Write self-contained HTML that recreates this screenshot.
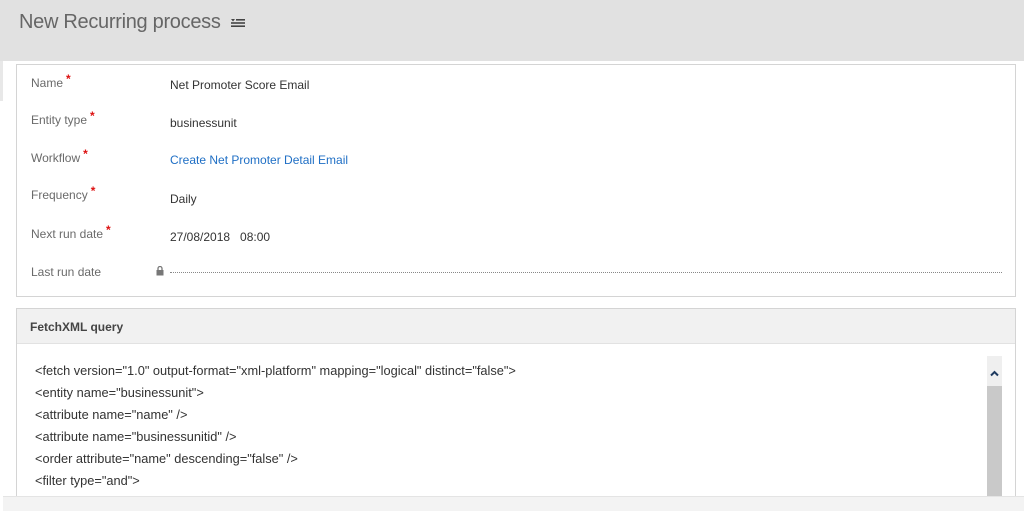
<!DOCTYPE html>
<html><head><meta charset="utf-8"><style>
*{margin:0;padding:0;box-sizing:border-box}
html,body{width:1024px;height:511px;overflow:hidden}
body{background:#fff;font-family:"Liberation Sans",sans-serif;position:relative}
.hdr{position:absolute;left:0;top:0;width:1024px;height:61px;background:#e1e1e1}
.title{position:absolute;left:19px;top:11px;font-size:20px;color:#666;letter-spacing:-0.3px;white-space:nowrap}
.ic{position:absolute;left:231px;top:18px}
.strip{position:absolute;left:0;top:61px;width:3px;height:40px;background:#e8e8e8}
.box1{position:absolute;left:16px;top:64px;width:1000px;height:233px;border:1px solid #d4d4d4;background:#fff}
.lbl{position:absolute;left:14px;font-size:12px;color:#6a6a6a}
.lbl b{color:#d11;font-weight:bold;font-size:12px;position:relative;top:-4px;margin-left:3px}
.val{position:absolute;left:153px;font-size:12px;color:#333}
.box2{position:absolute;left:16px;top:308px;width:1000px;height:203px;border:1px solid #d4d4d4;border-bottom:none;background:#fff;overflow:hidden}
.b2h{height:35px;background:#f1f1f1;border-bottom:1px solid #e2e2e2;font-size:12px;font-weight:bold;color:#444;padding:11px 0 0 13px}
.code{position:absolute;left:18px;font-size:12.8px;color:#333;white-space:pre}
.sb{position:absolute;left:970px;top:47px;width:15px;height:170px;background:#c9c9c9}
.sbu{position:absolute;left:970px;top:47px;width:15px;height:30px;background:#efefef}
.bot{position:absolute;left:3px;top:496px;width:1021px;height:15px;background:#f3f3f3;border-top:1px solid #e4e4e4;z-index:5}
</style></head><body>
<div class="hdr"><div class="title">New Recurring process</div>
<svg class="ic" width="14" height="10"><polygon points="0,1 4,1 2,3.5" fill="#444"/><rect x="5" y="1" width="9" height="1.6" fill="#444"/><rect x="0" y="4.2" width="14" height="1.6" fill="#444"/><rect x="0" y="7.4" width="14" height="1.6" fill="#444"/></svg></div>
<div class="strip"></div>
<div class="box1">
<div class="lbl" style="top:11px">Name<b>*</b></div><div class="val" style="top:13px">Net Promoter Score Email</div>
<div class="lbl" style="top:48px">Entity type<b>*</b></div><div class="val" style="top:51px">businessunit</div>
<div class="lbl" style="top:86px">Workflow<b>*</b></div><div class="val" style="top:88px;color:#1f6fc5">Create Net Promoter Detail Email</div>
<div class="lbl" style="top:123px">Frequency<b>*</b></div><div class="val" style="top:127px">Daily</div>
<div class="lbl" style="top:162px">Next run date<b>*</b></div><div class="val" style="top:165px">27/08/2018&nbsp;&nbsp; 08:00</div>
<div class="lbl" style="top:200px">Last run date</div>
<svg style="position:absolute;left:139px;top:201px" width="8" height="10"><path d="M2 4V2.5a2 2 0 0 1 4 0V4" stroke="#777" stroke-width="1.3" fill="none"/><rect x="0.5" y="4" width="7" height="5.5" fill="#777"/></svg>
<div style="position:absolute;left:153px;top:207px;width:832px;border-top:1px dotted #888"></div>
</div>
<div class="box2"><div class="b2h">FetchXML query</div>
<div class="code" style="top:54px">&lt;fetch version="1.0" output-format="xml-platform" mapping="logical" distinct="false"&gt;</div>
<div class="code" style="top:76px">&lt;entity name="businessunit"&gt;</div>
<div class="code" style="top:98px">&lt;attribute name="name" /&gt;</div>
<div class="code" style="top:120px">&lt;attribute name="businessunitid" /&gt;</div>
<div class="code" style="top:142px">&lt;order attribute="name" descending="false" /&gt;</div>
<div class="code" style="top:164px">&lt;filter type="and"&gt;</div>
<div class="sb"></div><div class="sbu"><svg width="15" height="30"><path d="M4 19.5L7.5 16L11 19.5" stroke="#1e3a5f" stroke-width="2" fill="none"/></svg></div>
</div>
<div class="bot"></div>
</body></html>
